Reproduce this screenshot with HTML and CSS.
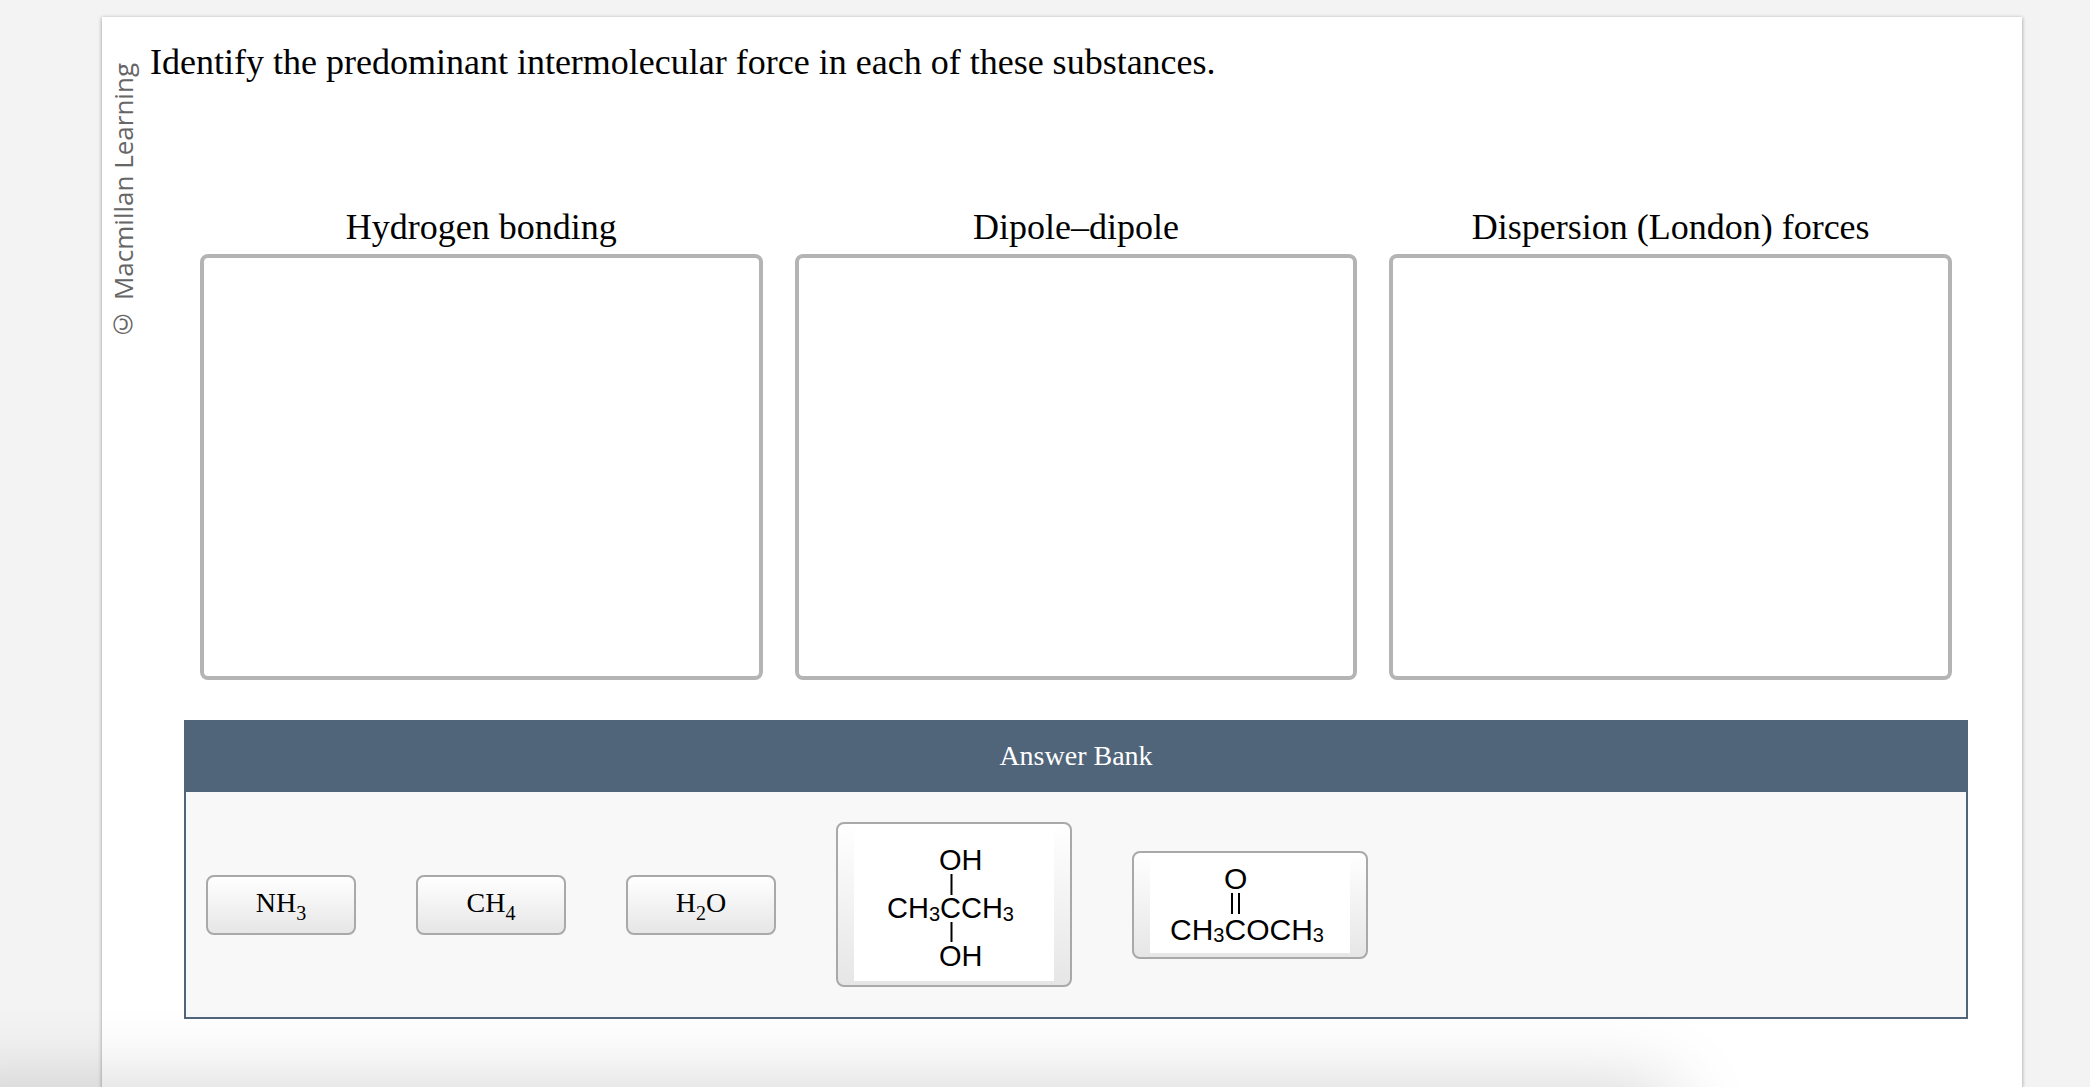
FILE: index.html
```html
<!DOCTYPE html>
<html lang="en">
<head>
<meta charset="utf-8">
<title>Intermolecular forces</title>
<link rel="stylesheet" href="styles.css">
</head>
<body>
<main class="card">
  <p class="copyright">© Macmillan Learning</p>
  <div class="question">
    <h1 class="prompt">Identify the predominant intermolecular force in each of these substances.</h1>
    <div class="sorter">
      <div class="bins">
        <section class="bin" aria-labelledby="bin-hydrogen">
          <h2 class="bin-label" id="bin-hydrogen">Hydrogen bonding</h2>
          <div class="bin-drop"></div>
        </section>
        <section class="bin" aria-labelledby="bin-dipole">
          <h2 class="bin-label" id="bin-dipole">Dipole–dipole</h2>
          <div class="bin-drop"></div>
        </section>
        <section class="bin" aria-labelledby="bin-dispersion">
          <h2 class="bin-label" id="bin-dispersion">Dispersion (London) forces</h2>
          <div class="bin-drop"></div>
        </section>
      </div>
      <section class="bank">
        <h2 class="bank-title">Answer Bank</h2>
        <div class="bank-items">
          <button type="button" class="item">NH<sub>3</sub></button>
          <button type="button" class="item">CH<sub>4</sub></button>
          <button type="button" class="item">H<sub>2</sub>O</button>
          <button type="button" class="item item-structure">
            <svg class="structure" width="200" height="154" viewBox="0 0 200 154" font-size="29">
              <text x="85" y="43">OH</text>
              <path d="M97.5 47v21M97.5 95v20" stroke="#000" stroke-width="2"/>
              <text x="33" y="91">CH<tspan class="structure-sub" dy="3">3</tspan><tspan dy="-3">CCH</tspan><tspan class="structure-sub" dy="3">3</tspan></text>
              <text x="85" y="139">OH</text>
            </svg>
          </button>
          <button type="button" class="item item-structure">
            <svg class="structure" width="200" height="97" viewBox="0 0 200 97" font-size="30">
              <text x="74" y="33">O</text>
              <path d="M82 37v21M89 37v21" stroke="#000" stroke-width="2"/>
              <text x="20" y="84">CH<tspan class="structure-sub" dy="2">3</tspan><tspan dy="-2">COCH</tspan><tspan class="structure-sub" dy="2">3</tspan></text>
            </svg>
          </button>
        </div>
      </section>
    </div>
  </div>
</main>
<div class="bottom-shade"></div>
</body>
</html>
```
FILE: styles.css
```css
* {
  box-sizing: border-box;
}

body {
  margin: 0;
  padding: 17px 68px 0 102px;
  background: #f3f3f3;
  color: #000;
  font-family: "Liberation Serif", "Times New Roman", serif;
}

h1,
h2,
p {
  margin: 0;
  font-weight: 400;
}

.card {
  display: flex;
  align-items: flex-start;
  min-height: calc(100vh - 17px);
  background: #fff;
  box-shadow: 0 1px 4px rgba(0, 0, 0, 0.4);
}

.copyright {
  flex: 0 0 48px;
  padding: 0 3px 46px 0;
  writing-mode: vertical-rl;
  transform: rotate(180deg);
  color: #666;
  font-family: "Open Sans", sans-serif;
  font-size: 26px;
  font-weight: 500;
  line-height: 36px;
  white-space: nowrap;
}

.question {
  flex: 1;
  padding: 25px 54px 68px 0;
}

.prompt {
  font-size: 36px;
  line-height: 40px;
}

.sorter {
  margin: 125px 0 0 34px;
}

.bins {
  display: grid;
  grid-template-columns: repeat(3, 1fr);
}

.bin {
  padding: 0 16px;
}

.bin-label {
  margin-bottom: 7px;
  font-size: 36px;
  line-height: 40px;
  text-align: center;
}

.bin-drop {
  height: 426px;
  border: 4px solid #b4b4b4;
  border-radius: 8px;
}

.bank {
  margin-top: 40px;
  border: 2px solid #50657a;
  background: #f8f8f8;
}

.bank-title {
  padding: 18px 0 20px;
  background: #50657a;
  color: #fff;
  font-size: 28px;
  line-height: 32px;
  text-align: center;
}

.bank-items {
  display: flex;
  flex-wrap: wrap;
  align-items: center;
  gap: 60px;
  padding: 30px 20px;
}

.item {
  min-width: 150px;
  height: 60px;
  padding: 0 16px 4px;
  border: 2px solid #a9a9a9;
  border-radius: 8px;
  background: linear-gradient(#fff, #e6e6e6);
  color: #000;
  font-family: inherit;
  font-size: 28px;
  line-height: 32px;
}

.item sub {
  position: relative;
  top: 8px;
  font-size: 20px;
  line-height: 0;
  vertical-align: baseline;
}

.item-structure {
  height: auto;
  padding: 3px 16px 4px;
}

.structure {
  display: block;
  background: #fff;
  font-family: "Liberation Sans", Arial, sans-serif;
}

.structure-sub {
  font-size: 20px;
}

/* Soft shade rising from below the window */
.bottom-shade {
  position: fixed;
  top: 100%;
  right: 20%;
  left: -80px;
  height: 200px;
  box-shadow: 0 0 80px rgba(0, 0, 0, 0.18);
  pointer-events: none;
}
```
